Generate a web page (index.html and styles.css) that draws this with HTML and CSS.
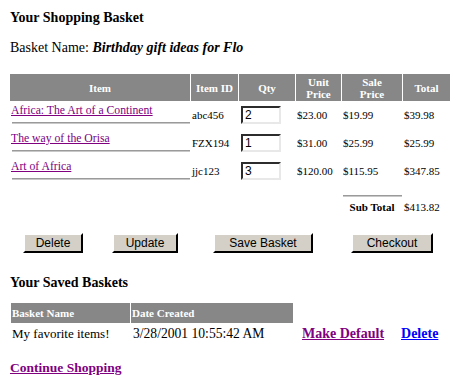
FILE: index.html
```html
<!DOCTYPE html>
<html>
<head>
  <title>Your Shopping Basket</title>
  <link rel="stylesheet" href="styles.css">
</head>
<body>
  <h3 class="title">Your Shopping Basket</h3>
  <p class="basket-name">Basket Name: <b><i>Birthday gift ideas for Flo</i></b></p>

  <form id="basket-form">
    <table class="basket">
      <colgroup>
        <col class="c-item"><col class="c-id"><col class="c-qty"><col class="c-unit"><col class="c-sale"><col class="c-total">
      </colgroup>
      <tr>
        <th>Item</th>
        <th>Item ID</th>
        <th>Qty</th>
        <th>Unit<br>Price</th>
        <th>Sale<br>Price</th>
        <th>Total</th>
      </tr>
      <tr class="line">
        <td class="item"><a href="#">Africa: The Art of a Continent</a><hr></td>
        <td>abc456</td>
        <td class="qty"><input type="text" value="2"></td>
        <td>$23.00</td>
        <td>$19.99</td>
        <td>$39.98</td>
      </tr>
      <tr class="line">
        <td class="item"><a href="#">The way of the Orisa</a><hr></td>
        <td>FZX194</td>
        <td class="qty"><input type="text" value="1"></td>
        <td>$31.00</td>
        <td>$25.99</td>
        <td>$25.99</td>
      </tr>
      <tr class="line">
        <td class="item"><a href="#">Art of Africa</a><hr></td>
        <td>jjc123</td>
        <td class="qty"><input type="text" value="3"></td>
        <td>$120.00</td>
        <td>$115.95</td>
        <td>$347.85</td>
      </tr>
      <tr>
        <td colspan="4"></td>
        <td class="subtotal-label"><hr>Sub Total</td>
        <td class="subtotal">$413.82</td>
      </tr>
    </table>

    <div class="buttons">
      <input type="button" class="btn btn-delete" value="Delete">
      <input type="button" class="btn btn-update" value="Update">
      <input type="button" class="btn btn-save" value="Save Basket">
      <input type="button" class="btn btn-checkout" value="Checkout">
    </div>
  </form>

  <h3 class="title saved-title">Your Saved Baskets</h3>

  <table class="saved">
    <tr>
      <th class="s-name">Basket Name</th>
      <th class="s-date">Date Created</th>
      <td></td>
      <td></td>
    </tr>
    <tr>
      <td>My favorite items!</td>
      <td class="date">3/28/2001 10:55:42 AM</td>
      <td class="action"><a href="#">Make Default</a></td>
      <td class="action action-delete"><a href="#" class="new">Delete</a></td>
    </tr>
  </table>

  <p class="continue"><a href="#">Continue Shopping</a></p>
</body>
</html>
```

FILE: styles.css
```css
body {
  margin: 0;
  padding: 10px;
  background-color: #FFF;
  color: #000;
  font-family: "Liberation Serif", "Times New Roman", serif;
  font-size: 13px;
}

a {
  color: #800080; /* visited purple */
}

.title {
  font-size: 14px;
  margin: 0;
  line-height: 15px;
}

.basket-name {
  font-size: 14px;
  margin: 15px 0 18px;
  line-height: 16px;
}

/* basket table */
.basket {
  table-layout: fixed;
  border-collapse: separate;
  border-spacing: 1px 0;
  margin-left: -1px;
  width: 442px;
  font-size: 11px;
}

.c-item { width: 180px; }
.c-id { width: 47px; }
.c-qty { width: 56px; }
.c-unit { width: 45px; }
.c-sale { width: 60px; }
.c-total { width: 47px; }

.basket th {
  background-color: #878787;
  color: #FFF;
  font-size: 11px;
  line-height: 12px;
  height: 27px;
  padding: 0;
}

.basket td {
  padding: 0 0 0 1px;
  vertical-align: middle;
  white-space: nowrap;
}

.basket tr.line {
  height: 28px;
}

.basket td.item {
  vertical-align: top;
  padding-top: 3px;
  line-height: 13px;
}

.item a {
  font-size: 11.7px;
}

hr {
  border: 0;
  border-top: 1px solid #9a9a9a;
  border-bottom: 1px solid #c8c8c8;
  height: 0;
  margin: 5px 0 0 1px;
}

.basket td.qty {
  padding-left: 2px;
}

.qty input {
  display: block;
  width: 40px;
  height: 18px;
  box-sizing: border-box;
  border: 2px inset #d4d0c8;
  border-color: #808080 #e8e8e8 #e8e8e8 #808080;
  padding: 0 2px;
  font-family: "Liberation Sans", Arial, sans-serif;
  font-size: 12px;
}

.basket td.subtotal-label {
  text-align: center;
  font-weight: bold;
  vertical-align: top;
  padding: 0;
  line-height: 13px;
}

.subtotal-label hr {
  margin: 10px 0 4px 1px;
}

.basket td.subtotal {
  vertical-align: bottom;
  line-height: 13px;
}

/* buttons row */
.buttons {
  display: flex;
  margin-top: 19px;
  padding-left: 13px;
}

.btn {
  height: 20px;
  box-sizing: border-box;
  background-color: #d4d0c8;
  border: 2px outset #d4d0c8;
  border-color: #fff #404040 #404040 #fff;
  font-family: "Liberation Sans", Arial, sans-serif;
  font-size: 12px;
  color: #000;
  padding: 0;
}

.btn-delete { width: 60px; }
.btn-update { width: 66px; margin-left: 29px; }
.btn-save { width: 100px; margin-left: 35px; }
.btn-checkout { width: 82px; margin-left: 38px; }

.saved-title {
  margin-top: 22px;
}

/* saved baskets */
.saved {
  border-collapse: separate;
  border-spacing: 1px 0;
  margin-top: 13px;
  font-size: 13px;
}

.saved th {
  background-color: #878787;
  color: #FFF;
  font-size: 11px;
  text-align: left;
  height: 18px;
  padding: 0 0 0 1px;
}

.s-name { width: 118px; }
.s-date { width: 161px; }

.saved td {
  height: 20px;
  padding: 0 0 0 1px;
  line-height: 15px;
}

.saved td.date {
  font-size: 13.6px;
  padding-left: 2px;
}

.saved td.action {
  font-weight: bold;
  font-size: 14px;
  padding-left: 8px;
}

.saved td.action-delete {
  padding-left: 16px;
}

.saved a.new {
  color: #0000FF;
}

.continue {
  margin: 17px 0 0;
  font-weight: bold;
  font-size: 13.5px;
  line-height: 16px;
}
```
